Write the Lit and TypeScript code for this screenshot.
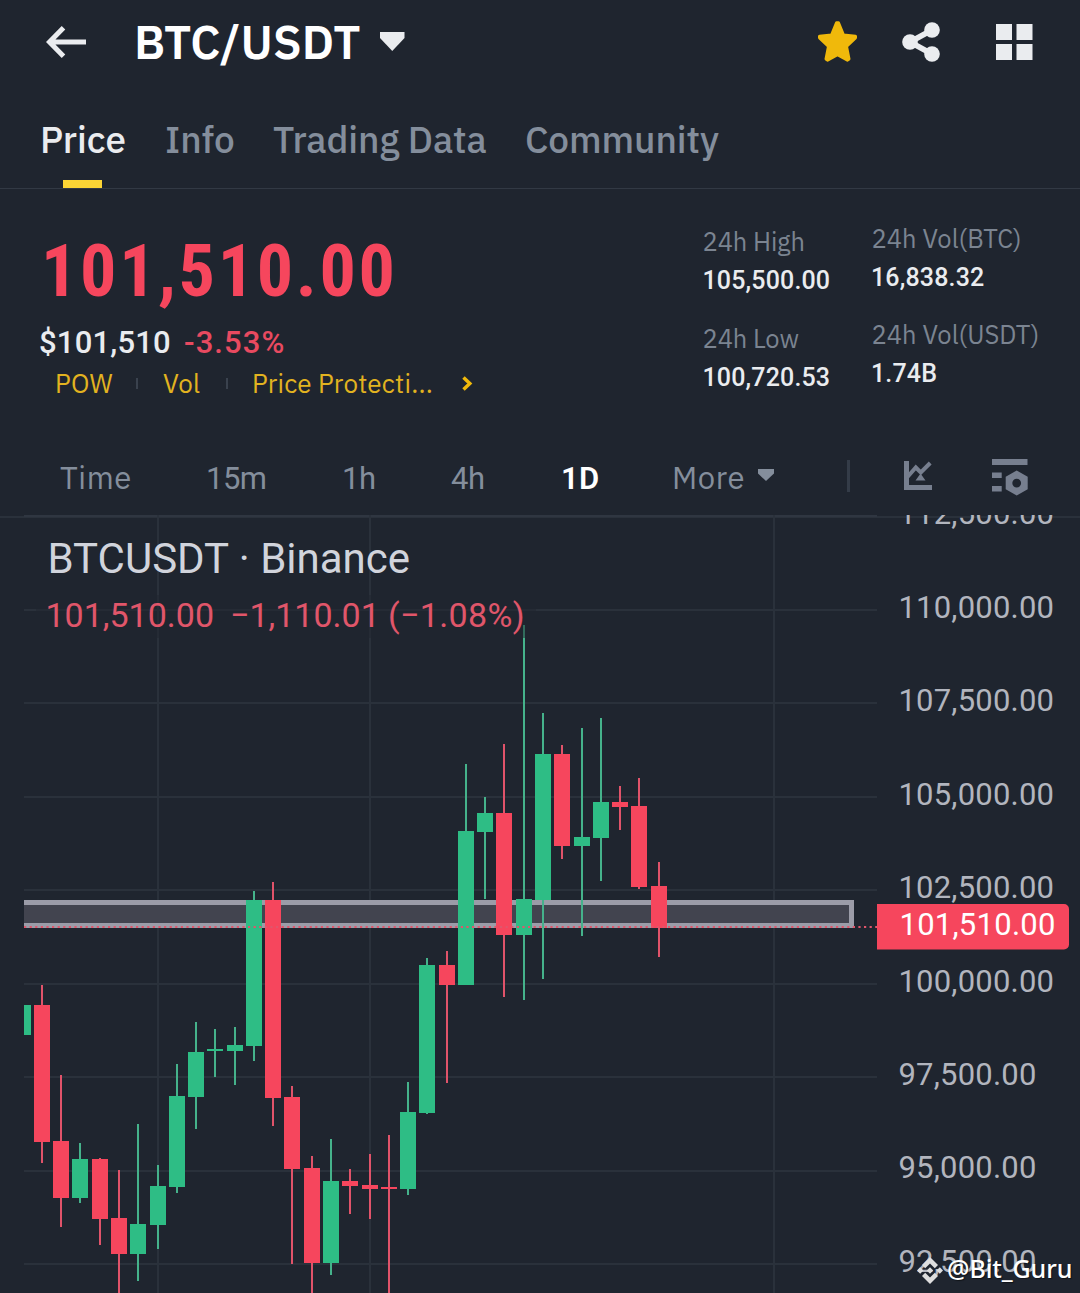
import { LitElement, html, svg, css } from 'lit';
import { customElement } from 'lit/decorators.js';
import { classMap } from 'lit/directives/class-map.js';

type Candle = {
  x: number;
  up: boolean;
  top: number;
  bottom: number;
  high: number;
  low: number;
};

const c = (x: number, dir: 'g' | 'r', top: number, bottom: number, high: number, low: number): Candle => ({
  x,
  up: dir === 'g',
  top,
  bottom,
  high,
  low,
});

const CANDLES: Candle[] = [
  c(15, 'g', 1005, 1035, 1005, 1035),
  c(34, 'r', 1005, 1142, 985, 1163),
  c(53, 'r', 1141, 1198, 1075, 1227),
  c(72, 'g', 1159, 1198, 1143, 1203),
  c(92, 'r', 1159, 1219, 1158, 1245),
  c(111, 'r', 1218, 1254, 1170, 1300),
  c(130, 'g', 1224, 1254, 1124, 1281),
  c(150, 'g', 1186, 1225, 1165, 1249),
  c(169, 'g', 1096, 1187, 1064, 1193),
  c(188, 'g', 1052, 1097, 1022, 1129),
  c(207, 'g', 1049, 1051, 1029, 1077),
  c(227, 'g', 1045, 1051, 1027, 1085),
  c(246, 'g', 900, 1046, 891, 1061),
  c(265, 'r', 900, 1098, 882, 1126),
  c(284, 'r', 1097, 1169, 1086, 1264),
  c(304, 'r', 1168, 1263, 1156, 1300),
  c(323, 'g', 1181, 1263, 1139, 1275),
  c(342, 'r', 1181, 1186, 1169, 1214),
  c(362, 'r', 1185, 1189, 1154, 1219),
  c(381, 'r', 1187, 1189, 1135, 1300),
  c(400, 'g', 1112, 1189, 1082, 1195),
  c(419, 'g', 965, 1113, 958, 1114),
  c(439, 'r', 965, 985, 951, 1083),
  c(458, 'g', 831, 985, 764, 985),
  c(477, 'g', 813, 832, 797, 899),
  c(496, 'r', 813, 935, 744, 997),
  c(516, 'g', 899, 935, 625, 1000),
  c(535, 'g', 754, 900, 713, 979),
  c(554, 'r', 754, 846, 745, 859),
  c(574, 'g', 837, 846, 728, 936),
  c(593, 'g', 802, 838, 718, 881),
  c(612, 'r', 802, 807, 786, 830),
  c(631, 'r', 806, 887, 778, 889),
  c(651, 'r', 886, 928, 862, 957),
];

const GRID_Y = [609, 702, 796, 889, 983, 1076, 1170, 1263];
const GRID_X = [157, 369, 773];
const AXIS = [
  { y: 524, text: '112,500.00' },
  { y: 618, text: '110,000.00' },
  { y: 711, text: '107,500.00' },
  { y: 805, text: '105,000.00' },
  { y: 898, text: '102,500.00' },
  { y: 992, text: '100,000.00' },
  { y: 1085, text: '97,500.00' },
  { y: 1178, text: '95,000.00' },
  { y: 1272, text: '92,500.00' },
];

@customElement('price-chart')
export class PriceChart extends LitElement {
  static styles = css`
    :host { display: block; height: 778px; overflow: hidden; }
    svg { display: block; }
    text { font-family: Roboto, sans-serif; white-space: pre; }
    .grid { fill: #2a313b; }
    .edge { fill: #2f3641; }
    .up { fill: #2ebd85; }
    .down { fill: #f6465d; }
    .wick.up { fill: #45b28b; }
    .wick.down { fill: #e0536a; }
    .zone { fill: #42444f; stroke: #9b9ca8; stroke-width: 5; }
    .last { stroke: #e0566c; stroke-width: 2; stroke-dasharray: 2.2 3.4; }
    .veil { fill: #1f252f; opacity: 0.5; }
    .title { font-size: 42px; fill: #d1d4dc; }
    .change { font-size: 34px; fill: #e0566a; }
    .axis { font-size: 31px; fill: #b2b5be; letter-spacing: 0.2px; }
    .tag-text { font-size: 31px; fill: #fff; letter-spacing: 0.25px; }
  `;

  render() {
    return html`<svg width="1080" height="778" viewBox="0 515 1080 778">
      <defs><clipPath id="plot"><rect x="24" y="515" width="853" height="778" /></clipPath></defs>
      <rect class="grid" x="0" y="516" width="1080" height="2" />
      <rect class="edge" x="24" y="515" width="853" height="2" />
      ${GRID_Y.map((y) => svg`<rect class="grid" x="24" y=${y} width="853" height="2" />`)}
      ${GRID_X.map((x) => svg`<rect class="grid" x=${x} y="515" width="2" height="778" />`)}
      <g clip-path="url(#plot)">
        <rect class="zone" x="15" y="902.5" width="836.5" height="23" />
        ${CANDLES.map((k) => {
          const tone = k.up ? 'up' : 'down';
          return svg`<rect class="wick ${tone}" x=${k.x + 7} y=${k.high} width="2" height=${k.low - k.high} />
            <rect class=${tone} x=${k.x} y=${k.top} width="16" height=${k.bottom - k.top} />`;
        })}
        <line class="last" x1="24" y1="927" x2="877" y2="927" />
      </g>
      <rect class="veil" x="36" y="595" width="500" height="43" />
      <text class="title" x="47.5" y="573">BTCUSDT · Binance</text>
      <text class="change" x="45.5" y="627">101,510.00</text>
      <text class="change" x="230" y="627">−1,110.01</text>
      <text class="change" x="388" y="627" letter-spacing="0.35">(−1.08%)</text>
      ${AXIS.map((a) => svg`<text class="axis" x="898.5" y=${a.y}>${a.text}</text>`)}
      <path class="down" d="M877 904H1064a5 5 0 0 1 5 5V944.500a5 5 0 0 1-5 5H877z" />
      <text class="tag-text" x="899.5" y="935">101,510.00</text>
    </svg>`;
  }
}

const TABS = ['Price', 'Info', 'Trading Data', 'Community'];
const FRAMES = [
  { label: 'Time', numeric: false, active: false },
  { label: '15m', numeric: true, active: false },
  { label: '1h', numeric: true, active: false },
  { label: '4h', numeric: true, active: false },
  { label: '1D', numeric: true, active: true },
  { label: 'More', numeric: false, active: false },
];

@customElement('app-root')
export class AppRoot extends LitElement {
  static styles = css`
    :host {
      display: block;
      position: relative;
      width: 1080px;
      height: 1293px;
      overflow: hidden;
      background: #1f252f;
      color: #eaecef;
      font-family: 'IBM Plex Sans', Roboto, sans-serif;
      white-space: nowrap;
    }
    * { box-sizing: border-box; }
    svg { display: block; flex: none; }

    .header { display: flex; align-items: center; height: 83px; padding: 0 47px 0 46px; }
    .pair { margin-left: 48px; width: 246px; font-size: 47px; font-weight: 600; letter-spacing: 0.1px; color: #fff; }
    .actions { display: flex; align-items: center; margin-left: auto; }
    .share { margin: 0 56px 0 45px; }

    .tabs {
      display: grid;
      grid-template-columns: 125px 108px 252px auto;
      height: 106px;
      padding: 7px 0 0 40px;
      border-bottom: 1px solid #323944;
      font-size: 37px;
      font-weight: 500;
      line-height: 99px;
      color: #848e9c;
    }
    .tab { position: relative; letter-spacing: -0.1px; }
    .tab.active { color: #eaecef; letter-spacing: 0; }
    .tab.active::after {
      content: '';
      position: absolute;
      left: 23px;
      top: 90px;
      width: 39px;
      height: 8px;
      background: #fcd535;
    }

    .quote { display: flex; height: 251px; padding-left: 39px; }
    .main { width: 664px; padding-top: 44px; }
    .price {
      padding-left: 2px;
      font: 700 72px/78px Roboto, sans-serif;
      font-stretch: 75%;
      letter-spacing: 2.7px;
      color: #f6465d;
    }
    .sub {
      display: grid;
      grid-template-columns: 145px auto;
      margin-top: 10px;
      font: 500 31px/44px Roboto, sans-serif;
      letter-spacing: 0.2px;
    }
    .pct { color: #e84a60; letter-spacing: 1.1px; }
    .tags {
      display: grid;
      grid-template-columns: 81px 27px 63px 25px 211px auto;
      align-items: center;
      padding-left: 16px;
      margin-top: -1px;
      font-size: 26px;
      line-height: 38px;
      letter-spacing: 0.2px;
      color: #e2b320;
    }
    .tick { width: 2px; height: 11px; background: #3a424e; }
    .protect { padding-left: 1px; }

    .stats { display: grid; grid-template-columns: 168.5px auto; }
    .col { display: flex; flex-direction: column; gap: 27px; padding-top: 35px; }
    .col.first { padding-top: 38px; gap: 28px; }
    .stat { display: flex; flex-direction: column; gap: 9px; }
    .k { font-size: 25.5px; line-height: 30px; color: #7b8491; }
    .first .k { letter-spacing: -0.15px; margin-left: -0.5px; }
    .v { font: 500 25px/30px Roboto, sans-serif; letter-spacing: 0.15px; margin-left: -0.5px; }

    .frames { display: flex; height: 75px; padding: 17px 0 0 60px; color: #848e9c; }
    .list {
      display: grid;
      grid-template-columns: 146px 136px 109px 110px 111px 86px;
      align-items: baseline;
      height: 40px;
      margin-top: 1px;
      font-size: 31px;
      line-height: 40px;
    }
    .frame { letter-spacing: 0.6px; }
    .frame.numeric { font-family: Roboto, sans-serif; letter-spacing: -0.5px; }
    .frame.active { color: #fff; font-weight: 600; letter-spacing: 0.2px; }
    .caret { margin-top: 12px; }
    .divider { width: 3px; height: 32px; margin: 3px 54px 0 73px; background: #343c48; }
    .indicator { margin: 4px 60px 0 0; }
    .settings { margin-top: 2px; }

    .credit { position: absolute; left: 917px; top: 1250px; display: flex; align-items: center; color: #fff; }
    .credit svg { margin-top: 4px; }
    .credit span {
      margin-left: 4px;
      font: 500 25px/36px 'Noto Sans', sans-serif;
      letter-spacing: -0.1px;
      text-shadow: 1px 1px 1px rgba(0, 0, 0, 0.5);
    }
  `;

  private stat(label: string, value: string) {
    return html`<div class="stat"><span class="k">${label}</span><span class="v">${value}</span></div>`;
  }

  render() {
    return html`
      <div class="header">
        <svg width="40" height="32" viewBox="0 0 40 32" fill="none" stroke="#eaecef" stroke-width="5">
          <path d="M17.500 1.800 3.500 16l14 14.200M4 16h36" />
        </svg>
        <span class="pair">BTC/USDT</span>
        <svg width="25" height="19" viewBox="0 0 25 19" fill="#eaecef"><path d="M0 0h24.500v6L12.250 19 0 6z" /></svg>
        <div class="actions">
          <svg width="39" height="41" viewBox="0 0 39 41" fill="#f0b90b" stroke="#f0b90b" stroke-width="3" stroke-linejoin="round">
            <path d="M18.500 1.800h2l5 12.200 12 1.200v1.600l-9 8.500 2.500 12.700-1.500 1.200-10-5.600-10 5.600L8 38l2.500-12.700-9-8.500v-1.600l12-1.200z" />
          </svg>
          <svg class="share" width="38" height="40" viewBox="0 0 38 40" fill="#eaecef">
            <path d="M8 20 30 8M8 20l22 12" stroke="#eaecef" stroke-width="5.500" />
            <circle cx="8" cy="20" r="7.800" /><circle cx="30" cy="8" r="7.800" /><circle cx="30" cy="32" r="7.800" />
          </svg>
          <svg width="37" height="36" viewBox="0 0 37 36" fill="#eaecef">
            <path d="M0 0h16v16H0zM20.500 0h16v16h-16zM0 20h16v16H0zM20.500 20h16v16h-16z" />
          </svg>
        </div>
      </div>

      <div class="tabs">
        ${TABS.map((t, i) => html`<span class=${classMap({ tab: true, active: i === 0 })}>${t}</span>`)}
      </div>

      <div class="quote">
        <div class="main">
          <div class="price">101,510.00</div>
          <div class="sub"><span>$101,510</span><span class="pct">-3.53%</span></div>
          <div class="tags">
            <span>POW</span><i class="tick"></i><span>Vol</span><i class="tick"></i><span class="protect">Price Protecti...</span>
            <svg width="11" height="15" viewBox="0 0 11 15" fill="none" stroke="#f0b90b" stroke-width="3.500">
              <path d="M1.500 1.500 7.800 7.500l-6.300 6" />
            </svg>
          </div>
        </div>
        <div class="stats">
          <div class="col first">${this.stat('24h High', '105,500.00')}${this.stat('24h Low', '100,720.53')}</div>
          <div class="col">${this.stat('24h Vol(BTC)', '16,838.32')}${this.stat('24h Vol(USDT)', '1.74B')}</div>
        </div>
      </div>

      <div class="frames">
        <div class="list">
          ${FRAMES.map(
            (f) => html`<span class=${classMap({ frame: true, numeric: f.numeric, active: f.active })}>${f.label}</span>`
          )}
        </div>
        <svg class="caret" width="16" height="12" viewBox="0 0 16 12" fill="#848e9c"><path d="M0 0h16v4.500L8 12 0 4.500z" /></svg>
        <i class="divider"></i>
        <svg class="indicator" width="28" height="29" viewBox="0 0 28 29" fill="#777f8f">
          <path d="M0 0h5v24h23v5H0zM11.500 19.500 16.500 12.500l5 7z" />
          <path d="M3 16.500 11.800 6.500 16.800 11.500 26.200 2" fill="none" stroke="#777f8f" stroke-width="4" />
        </svg>
        <svg class="settings" width="36" height="37" viewBox="0 0 36 37" fill="#777f8f">
          <path d="M0 0h35.500v6H0zM0 13.500h9.700v5.500H0zM0 27h9.700v5.500H0z" />
          <path fill-rule="evenodd" d="M24.700 11.500 35.700 17.800v12.500L24.700 36.600 13.700 30.300V17.800zM24.700 19.700a4.400 4.400 0 1 0 0 8.800 4.400 4.400 0 0 0 0-8.800z" />
        </svg>
      </div>

      <price-chart></price-chart>

      <div class="credit">
        <svg width="26" height="27" viewBox="0 0 26 27" fill="#dedede">
          <path d="M13 0l8 8-3.200 3.200L13 6.400 8.200 11.200 5 8zM13 27l8-8-3.200-3.200L13 20.600l-4.800-4.800L5 19zM13 10.300l3.200 3.200-3.200 3.200-3.200-3.200zM3.200 10.300l3.200 3.200-3.200 3.200L0 13.500zM22.800 10.300l3.200 3.200-3.200 3.200-3.200-3.200z" />
        </svg>
        <span>@Bit_Guru</span>
      </div>
    `;
  }
}
